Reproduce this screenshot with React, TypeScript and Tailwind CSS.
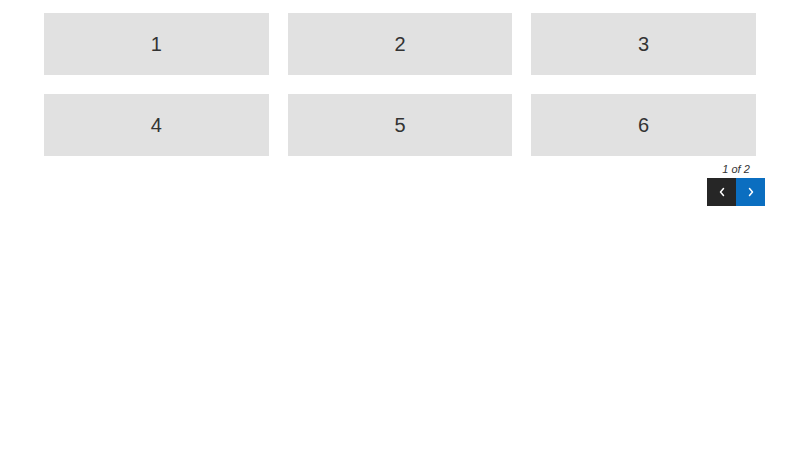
import React, { useState } from "react";

const items = ["1", "2", "3", "4", "5", "6", "7", "8", "9", "10", "11", "12"];
const PER_PAGE = 6;

const Chevron = ({ dir }: { dir: "left" | "right" }) => (
  <svg width="6" height="10" viewBox="0 0 6 10" fill="none">
    <path
      d={dir === "left" ? "M4.5 1.5 L1.5 5 L4.5 8.5" : "M1.5 1.5 L4.5 5 L1.5 8.5"}
      stroke="currentColor"
      strokeWidth="1.5"
      strokeLinecap="round"
      strokeLinejoin="round"
    />
  </svg>
);

const App = () => {
  const [page, setPage] = useState(0);
  const pages = Math.ceil(items.length / PER_PAGE);
  const visible = items.slice(page * PER_PAGE, page * PER_PAGE + PER_PAGE);

  return (
    <div className="min-h-[450px] bg-white px-[44px] pt-[13px] font-['Liberation_Sans',Arial,sans-serif]">
      <div className="grid grid-cols-3 gap-[19px]">
        {visible.map((n) => (
          <div
            key={n}
            className="h-[62px] bg-[#e1e1e1] flex items-center justify-center text-[20px] text-[#333333]"
          >
            {n}
          </div>
        ))}
      </div>

      <div className="flex justify-end mr-[-9px] mt-[4px]">
        <div className="flex flex-col items-center">
          <span className="text-[11px] leading-[18px] italic text-[#333333]">
            {page + 1} of {pages}
          </span>
          <div className="flex">
            <button
              onClick={() => setPage(Math.max(0, page - 1))}
              className="w-[29px] h-[28px] bg-[#262626] text-white flex items-center justify-center"
            >
              <Chevron dir="left" />
            </button>
            <button
              onClick={() => setPage(Math.min(pages - 1, page + 1))}
              className="w-[29px] h-[28px] bg-[#0b6ec0] text-white flex items-center justify-center"
            >
              <Chevron dir="right" />
            </button>
          </div>
        </div>
      </div>
    </div>
  );
};

export default App;
